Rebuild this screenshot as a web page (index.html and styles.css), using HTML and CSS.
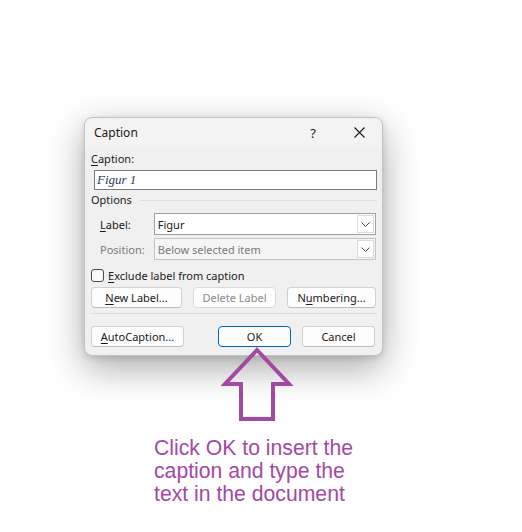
FILE: index.html
```html
<!DOCTYPE html>
<html>
<head>
<meta charset="utf-8">
<link rel="stylesheet" href="styles.css">
</head>
<body>
<div class="page">
  <div class="stage">
    <div class="dialog">
      <div class="titlebar">
        <span class="title">Caption</span>
        <span class="help">?</span>
        <svg class="close" width="11" height="11" viewBox="0 0 11 11"><path d="M0.5 0.5 L10.5 10.5 M10.5 0.5 L0.5 10.5" stroke="#1a1a1a" stroke-width="1.1" fill="none"/></svg>
      </div>
      <div class="body">
        <div class="lbl-row"><span class="u">C</span>aption:</div>
        <div class="input"><span class="cap-text">Figur 1</span></div>
        <div class="group-row"><span>Options</span><span class="group-line"></span></div>
        <div class="field-row">
          <span class="field-lbl"><span class="u">L</span>abel:</span>
          <div class="select">
            <span class="sel-text">Figur</span>
            <span class="sel-btn"><svg width="9" height="5" viewBox="0 0 9 5"><path d="M0.5 0.5 L4.5 4.5 L8.5 0.5" stroke="#444" stroke-width="1" fill="none"/></svg></span>
          </div>
        </div>
        <div class="field-row row2 disabled">
          <span class="field-lbl">Position:</span>
          <div class="select">
            <span class="sel-text">Below selected item</span>
            <span class="sel-btn"><svg width="9" height="5" viewBox="0 0 9 5"><path d="M0.5 0.5 L4.5 4.5 L8.5 0.5" stroke="#555" stroke-width="1" fill="none"/></svg></span>
          </div>
        </div>
        <div class="check-row">
          <span class="checkbox"></span>
          <span><span class="u">E</span>xclude label from caption</span>
        </div>
        <div class="btn-row">
          <span class="btn b-new"><span class="u">N</span>ew Label...</span>
          <span class="btn b-del dis">Delete Label</span>
          <span class="btn b-num">N<span class="u">u</span>mbering...</span>
        </div>
        <div class="sep"></div>
        <div class="btn-row bottom">
          <span class="btn b-auto"><span class="u">A</span>utoCaption...</span>
          <span class="spacer"></span>
          <span class="btn b-ok">OK</span>
          <span class="btn b-cancel">Cancel</span>
        </div>
      </div>
    </div>
    <svg class="arrow" width="72" height="78" viewBox="0 0 72 78"><polygon points="36,4 68,38 52,38 52,73 20,73 20,38 4,38" fill="none" stroke="#a349a4" stroke-width="4" stroke-linejoin="miter"/></svg>
  </div>
  <p class="note">Click OK to insert the<br>caption and type the<br>text in the document</p>
</div>
</body>
</html>
```
FILE: styles.css
```css
html, body { margin: 0; padding: 0; background: #ffffff; }
.page { width: 522px; height: 532px; overflow: hidden; }
.stage { position: relative; padding: 117px 0 0 84px; }
.dialog {
  box-sizing: border-box;
  width: 299px; height: 239px;
  border: 1px solid #c4c4c4;
  border-radius: 8px;
  background: #f0f0f0;
  box-shadow: 0 12px 36px rgba(0,0,0,0.34), 0 2px 6px rgba(0,0,0,0.12);
  font-family: "Noto Sans", "Open Sans", sans-serif;
  font-size: 11px;
  color: #1a1a1a;
  overflow: hidden;
}
.titlebar {
  height: 29px;
  background: #f3f3f3;
  display: flex; align-items: center;
  padding-left: 9px;
  border-radius: 7px 7px 0 0;
}
.title { font-size: 12px; flex: 1; margin-top: -1px; }
.help { font-size: 13px; width: 10px; margin-right: 36px; text-align: center; }
.close { margin-right: 17px; }
.body { padding: 4px 6px 0 6px; }
.u { text-decoration: underline; text-underline-offset: 2px; }
.lbl-row { height: 16px; line-height: 16px; }
.input {
  box-sizing: border-box;
  margin: 3px 0 0 3px;
  width: 283px; height: 20px;
  border: 1px solid #7a7a7a;
  background: #ffffff;
  padding-left: 2px;
  line-height: 18px;
}
.cap-text { font-family: "Liberation Serif", serif; font-style: italic; font-size: 13px; color: #1f3864; }
.group-row { margin-top: 2px; height: 16px; line-height: 16px; display: flex; align-items: center; }
.group-line { flex: 1; height: 1px; background: #dcdcdc; margin-left: 8px; margin-right: -1px; }
.field-row { display: flex; margin-top: 5px; height: 22px; align-items: center; }
.field-row.row2 { margin-top: 3px; }
.field-lbl { width: 54px; padding-left: 9px; }
.select {
  box-sizing: border-box;
  width: 223px; height: 22px;
  border: 1px solid #a0a0a0;
  background: #ffffff;
  display: flex; align-items: center;
}
.sel-text { flex: 1; padding-left: 3px; }
.sel-btn {
  box-sizing: border-box;
  width: 17px; height: 18px;
  margin-right: 1px;
  border: 1px solid #dadada;
  background: #ffffff;
  display: flex; align-items: center; justify-content: center;
}
.disabled .field-lbl, .disabled .sel-text { color: #7a7a7a; }
.disabled .select { background: #f5f5f5; border-color: #c4c4c4; }
.check-row { display: flex; align-items: center; margin-top: 8px; height: 14px; }
.checkbox {
  box-sizing: border-box;
  width: 13px; height: 13px;
  border: 1px solid #4a4a4a;
  border-radius: 3px;
  background: #fbfbfb;
  margin-right: 4px;
}
.btn-row { display: flex; margin-top: 5px; height: 21px; gap: 11px; }
.btn {
  box-sizing: border-box;
  height: 21px;
  border: 1px solid #d0d0d0;
  border-bottom-color: #bdbdbd;
  border-radius: 4px;
  background: #fdfdfd;
  display: flex; align-items: center; justify-content: center;
}
.b-new { width: 92px; }
.b-del { width: 84px; }
.b-num { width: 90px; }
.dis { color: #8a8a8a; border-color: #dadada; }
.sep { margin-top: 5px; height: 1px; background: #dcdcdc; width: 286px; }
.btn-row.bottom { margin-top: 12px; }
.b-auto { width: 93px; }
.spacer { flex: 1; margin-right: -11px; }
.b-ok { width: 73px; border: 1px solid #0067c0; }
.b-cancel { width: 73px; margin-right: 1px; }
.arrow { position: absolute; left: 221px; top: 346px; }
.note {
  margin: 80px 0 0 154px;
  font-family: "Liberation Sans", Arial, sans-serif;
  font-size: 21.2px;
  line-height: 23px;
  color: #a349a4;
}
```
